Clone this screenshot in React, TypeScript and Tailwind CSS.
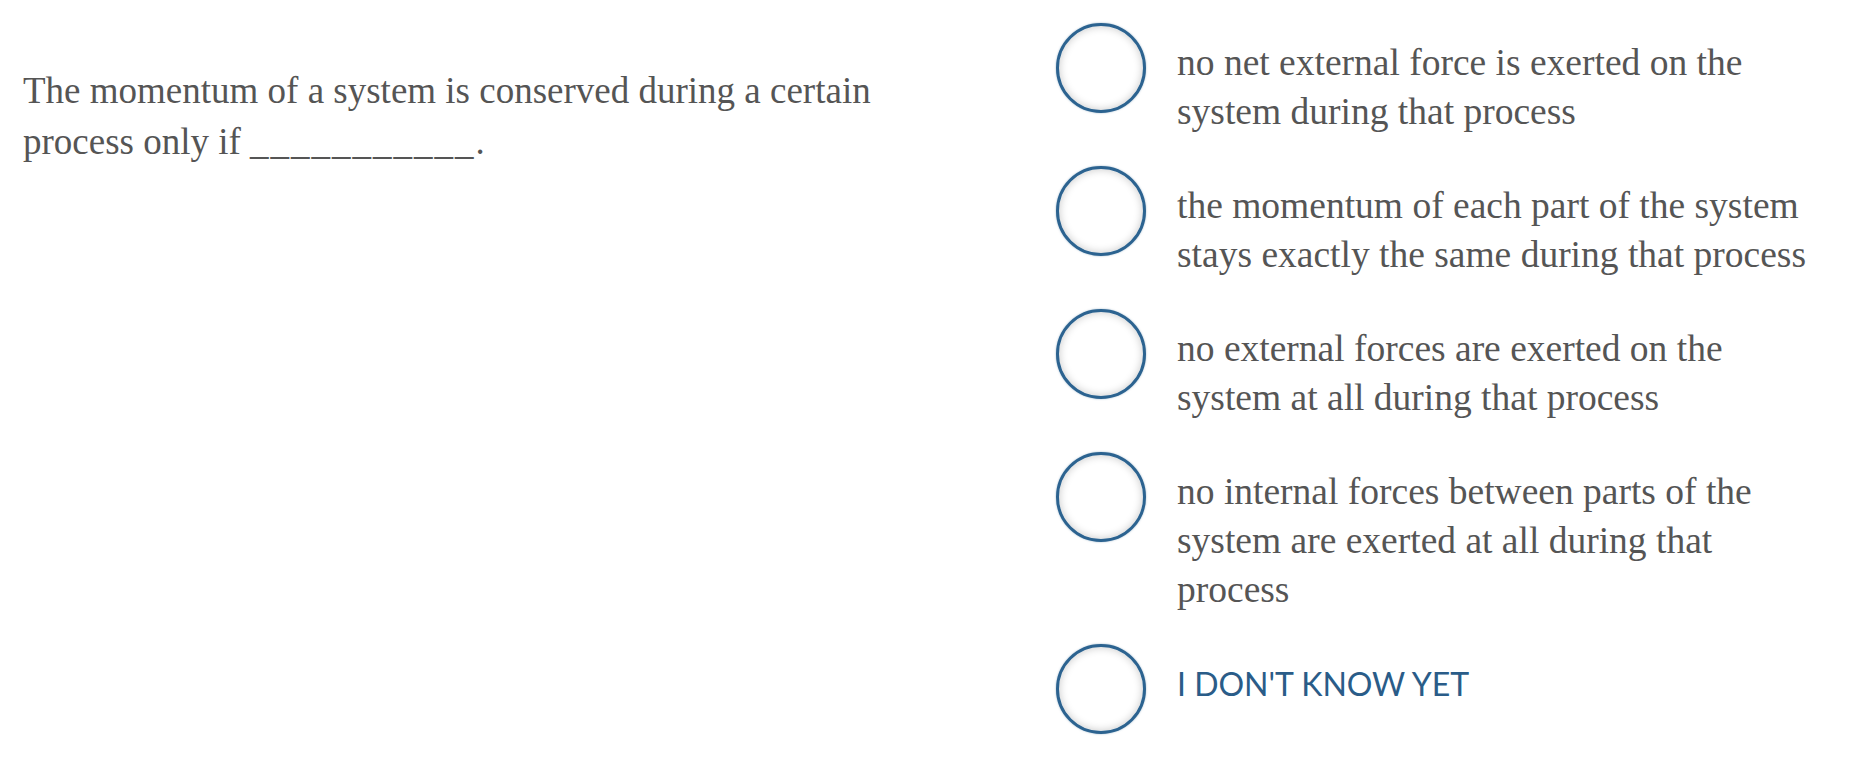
// Quiz question with multiple choice options
const options: { lines: string[]; unknown?: boolean }[] = [
  { lines: ['no net external force is exerted on the', 'system during that process'] },
  { lines: ['the momentum of each part of the system', 'stays exactly the same during that process'] },
  { lines: ['no external forces are exerted on the', 'system at all during that process'] },
  { lines: ['no internal forces between parts of the', 'system are exerted at all during that', 'process'] },
  { lines: ["I DON'T KNOW YET"], unknown: true },
];

function Radio() {
  return (
    <span className="block w-[90px] h-[90px] shrink-0 rounded-full border-[3px] border-[#2c6390] bg-white shadow-[inset_0_0_9px_rgba(0,0,0,0.22),0_0_2px_rgba(44,99,144,0.5)]" />
  );
}

export default function App() {
  return (
    <div className="w-[1860px] h-[784px] bg-white flex overflow-hidden">
      {/* Question */}
      <div className="w-[1056px] shrink-0 pl-[23px] pt-[65px]">
        <p className="text-[37px] leading-[51px] text-[#555555] font-['Liberation_Serif',serif]">
          The momentum of a system is conserved during a certain
          <br />
          process only if <span className="tracking-[2px]">___________</span>.
        </p>
      </div>

      {/* Answers */}
      <div className="flex-1 pt-[23px] flex flex-col gap-[30px]">
        {options.map((o, i) => (
          <label key={i} className="flex items-start cursor-pointer">
            <Radio />
            <span
              className={
                o.unknown
                  ? "pl-[31px] pt-[15px] text-[32px] leading-[49px] text-[#2a5c88] font-['Lato',sans-serif]"
                  : "pl-[31px] pt-[15px] text-[37.5px] leading-[49px] text-[#555555] font-['Liberation_Serif',serif] whitespace-nowrap"
              }
            >
              {o.lines.map((l, j) => (
                <span key={j} className="block">
                  {l}
                </span>
              ))}
            </span>
          </label>
        ))}
      </div>
    </div>
  );
}
